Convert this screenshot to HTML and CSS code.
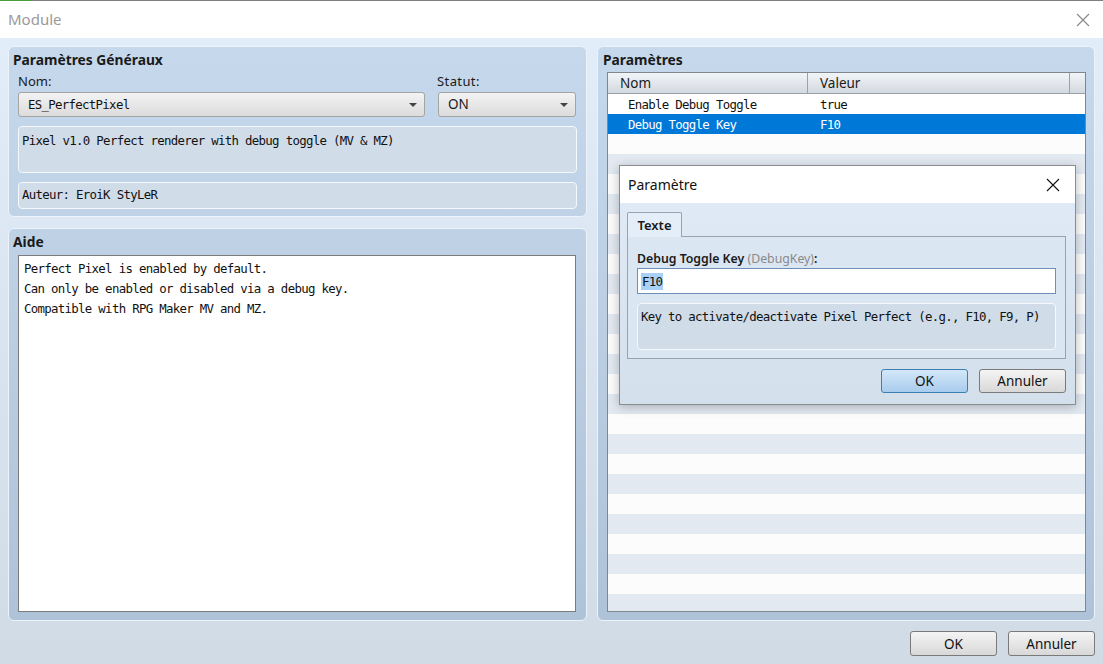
FILE: index.html
```html
<!DOCTYPE html>
<html lang="fr">
<head>
    <meta charset="UTF-8">
    <meta name="viewport" content="width=device-width, initial-scale=1.0">
    <title>Module</title>
    <link rel="stylesheet" href="styles.css">
</head>
<body>
    <div class="window">
        <div class="titlebar">
            <span class="title">Module</span>
            <svg class="close" width="14" height="14" viewBox="0 0 14 14">
                <path d="M1 1L13 13M13 1L1 13" stroke="#8a8a8a" stroke-width="1.2" fill="none"/>
            </svg>
        </div>

        <div class="content">
            <div class="column">
                <section class="group general">
                    <h2 class="group-title">Paramètres Généraux</h2>
                    <div class="form-row">
                        <label>Nom:</label>
                        <label>Statut:</label>
                        <div class="combo mono">ES_PerfectPixel<span class="arrow"></span></div>
                        <div class="combo">ON<span class="arrow"></span></div>
                    </div>
                    <div class="info desc mono">Pixel v1.0 Perfect renderer with debug toggle (MV &amp; MZ)</div>
                    <div class="info author mono">Auteur: EroiK StyLeR</div>
                </section>

                <section class="group help">
                    <h2 class="group-title">Aide</h2>
                    <div class="textarea mono">
                        <div>Perfect Pixel is enabled by default.</div>
                        <div>Can only be enabled or disabled via a debug key.</div>
                        <div>Compatible with RPG Maker MV and MZ.</div>
                    </div>
                </section>
            </div>

            <section class="group params">
                <h2 class="group-title">Paramètres</h2>
                <div class="list">
                    <div class="list-head">
                        <span class="col-name">Nom</span>
                        <span class="col-value">Valeur</span>
                        <span class="col-fill"></span>
                    </div>
                    <div class="list-body mono">
                        <div class="row"><span class="cell-name">Enable Debug Toggle</span><span class="cell-value">true</span></div>
                        <div class="row selected"><span class="cell-name">Debug Toggle Key</span><span class="cell-value">F10</span></div>
                    </div>
                </div>
            </section>
        </div>

        <div class="footer">
            <button class="btn">OK</button>
            <button class="btn">Annuler</button>
        </div>

        <!-- edit dialog for the selected parameter -->
        <div class="dialog">
            <div class="dialog-titlebar">
                <span class="dialog-title">Paramètre</span>
                <svg class="dialog-close" width="14" height="14" viewBox="0 0 14 14">
                    <path d="M1 1L13 13M13 1L1 13" stroke="#111" stroke-width="1.1" fill="none"/>
                </svg>
            </div>
            <div class="dialog-body">
                <div class="tabs">
                    <div class="tab">Texte</div>
                </div>
                <div class="tab-panel">
                    <div class="field-label">Debug Toggle Key <span class="key">(DebugKey)</span>:</div>
                    <div class="input mono"><span class="sel">F10</span></div>
                    <div class="info dialog-desc mono">Key to activate/deactivate Pixel Perfect (e.g., F10, F9, P)</div>
                </div>
                <div class="dialog-buttons">
                    <button class="btn default">OK</button>
                    <button class="btn">Annuler</button>
                </div>
            </div>
        </div>
    </div>
</body>
</html>
```

FILE: styles.css
```css
body {
    margin: 0;
    font-family: "Noto Sans", "Open Sans", sans-serif;
    font-size: 12px;
    color: #1a1a1a;
    overflow: hidden;
}

.mono {
    font-family: "DejaVu Sans Mono", monospace;
    font-size: 12.4px;
    letter-spacing: -0.7px;
    color: #111;
}

.window {
    position: relative;
    width: 1103px;
    height: 664px;
    background: linear-gradient(to bottom, #e3eefb 0, #dae5f1 45%, #d0dbe6 100%);
}

/* top edge: a sliver of green at the far left, grey line after it */
.titlebar {
    height: 38px;
    background:
        linear-gradient(to right, #4c9b3c 0, #4c9b3c 32px, #7f7f7f 32px) top / 100% 1px no-repeat,
        #fff;
    display: flex;
    align-items: center;
    justify-content: space-between;
    padding: 0 13px 0 8px;
    box-sizing: border-box;
}

.title {
    font-size: 15px;
    color: #9a9a9a;
}

.close {
    margin-top: 1px;
}

.content {
    display: flex;
    gap: 10px;
    padding: 8px 8px 0 8px;
    height: 575px;
}

.column {
    width: 579px;
    display: flex;
    flex-direction: column;
    gap: 11px;
}

.group {
    box-sizing: border-box;
    border: 1px solid #eef3f9;
    border-radius: 6px;
    background: linear-gradient(to bottom, #c6d8ec 46px, #afc3d8 621px) fixed;
    padding: 0 9px;
}

.group-title {
    margin: 0 0 0 -5px;
    font-size: 13.8px;
    font-weight: 700;
    height: 24px;
    line-height: 26px;
}

.general {
    height: 171px;
}

.help {
    flex: 1;
}

.help .group-title {
    height: 26px;
    line-height: 26px;
}

.params {
    width: 498px;
    padding: 0 8px 0 9px;
}

.params .group-title {
    margin-left: -4px;
    height: 25px;
}

/* name / status selectors */
.form-row {
    display: grid;
    grid-template-columns: 407px 138px;
    column-gap: 13px;
}

.form-row label {
    height: 21px;
    line-height: 21px;
    font-size: 13px;
}

.form-row label:nth-child(2) {
    margin-left: -1px;
    letter-spacing: 0.4px;
}

.combo {
    position: relative;
    box-sizing: border-box;
    height: 25px;
    line-height: 23px;
    padding-left: 9px;
    border: 1px solid #a4a4a4;
    border-radius: 3px;
    background: linear-gradient(to bottom, #f3f3f3, #dcdcdc);
}

.combo:not(.mono) {
    font-size: 13.5px;
}

.arrow {
    position: absolute;
    right: 7px;
    top: 10px;
    border-left: 4px solid transparent;
    border-right: 4px solid transparent;
    border-top: 4px solid #444;
}

.info {
    box-sizing: border-box;
    background: #d0dce8;
    border: 1px solid #f5f8fc;
    border-radius: 4px;
    padding: 5px 3px;
    line-height: 18px;
}

.desc {
    margin-top: 9px;
    height: 47px;
}

.author {
    margin-top: 9px;
    height: 27px;
    padding-top: 3px;
}

.textarea {
    box-sizing: border-box;
    height: 357px;
    margin-right: 1px;
    background: #fff;
    border: 1px solid #7b7b7b;
    padding: 3px 5px;
    line-height: 20px;
}

/* parameter list */
.list {
    box-sizing: border-box;
    height: 540px;
    border: 1px solid #80868e;
    display: flex;
    flex-direction: column;
}

.list-head {
    display: flex;
    height: 20px;
    line-height: 20px;
    font-size: 13.5px;
    background: linear-gradient(to bottom, #f2f4f7, #d3d9e0);
    border-bottom: 1px solid #9aa1aa;
}

.list-head span {
    box-sizing: border-box;
    border-right: 1px solid #9aa1aa;
}

.col-name {
    width: 200px;
    padding-left: 12px;
}

.col-value {
    width: 262px;
    padding-left: 12px;
}

.col-fill {
    flex: 1;
    border-right: none !important;
}

.list-body {
    flex: 1;
    background: repeating-linear-gradient(to bottom, #fcfcfc 0, #fcfcfc 20px, #e2e9f1 20px, #e2e9f1 40px);
}

.row {
    display: flex;
    height: 20px;
    line-height: 21px;
    background: #fff;
}

.row.selected {
    background: #0078d7;
    color: #fff;
}

.cell-name {
    width: 200px;
    padding-left: 20px;
    box-sizing: border-box;
}

.cell-value {
    padding-left: 12px;
}

.footer {
    display: flex;
    justify-content: flex-end;
    gap: 11px;
    padding: 10px 8px 0 0;
}

.btn {
    width: 87px;
    height: 25px;
    font-family: "Noto Sans", "Open Sans", sans-serif;
    font-size: 13.5px;
    color: #111;
    border: 1px solid #7a7a7a;
    border-radius: 3px;
    background: linear-gradient(to bottom, #f4f4f4, #d8d8d8);
    padding: 0;
}

.btn.default {
    border-color: #3c7fb1;
    background: linear-gradient(to bottom, #d3e7f9, #a9ccee);
}

/* modal dialog */
.dialog {
    position: absolute;
    left: 619px;
    top: 165px;
    width: 457px;
    height: 240px;
    box-sizing: border-box;
    border: 1px solid #8c8c8c;
    box-shadow: 0 2px 10px rgba(0, 0, 0, 0.25);
    display: flex;
    flex-direction: column;
}

.dialog-titlebar {
    height: 37px;
    background: #fff;
    display: flex;
    align-items: center;
    justify-content: space-between;
    padding: 0 15px 0 8px;
}

.dialog-title {
    font-size: 14px;
    color: #111;
}

.dialog-body {
    flex: 1;
    background: linear-gradient(to bottom, #e0eaf7, #d3dfeb);
    padding: 9px 9px 0 7px;
}

.tabs {
    display: flex;
}

.tab {
    box-sizing: border-box;
    width: 55px;
    height: 25px;
    line-height: 24px;
    text-align: center;
    font-size: 13px;
    font-weight: 600;
    border: 1px solid #9aa3ad;
    border-bottom: none;
    border-radius: 2px 2px 0 0;
    background: #e4eef9;
    position: relative;
    z-index: 1;
    margin-bottom: -1px;
    padding-bottom: 1px;
}

.tab-panel {
    box-sizing: border-box;
    height: 123px;
    border: 1px solid #9aa3ad;
    background: #dbe6f3;
    padding: 12px 9px 0 9px;
}

.field-label {
    height: 19px;
    line-height: 19px;
    font-size: 12.3px;
    font-weight: 600;
}

.field-label .key {
    font-weight: 400;
    color: #8a8a8a;
}

.input {
    box-sizing: border-box;
    height: 26px;
    line-height: 26px;
    border: 1px solid #6d8fb8;
    background: #fff;
    padding-left: 3px;
}

.sel {
    background: #a9d1f5;
    padding: 1px 1px;
}

.dialog-desc {
    margin-top: 9px;
    height: 47px;
    padding-top: 4px;
}

.dialog-buttons {
    display: flex;
    justify-content: flex-end;
    gap: 11px;
    padding-top: 10px;
}

.dialog-buttons .btn {
    height: 24px;
}
```
